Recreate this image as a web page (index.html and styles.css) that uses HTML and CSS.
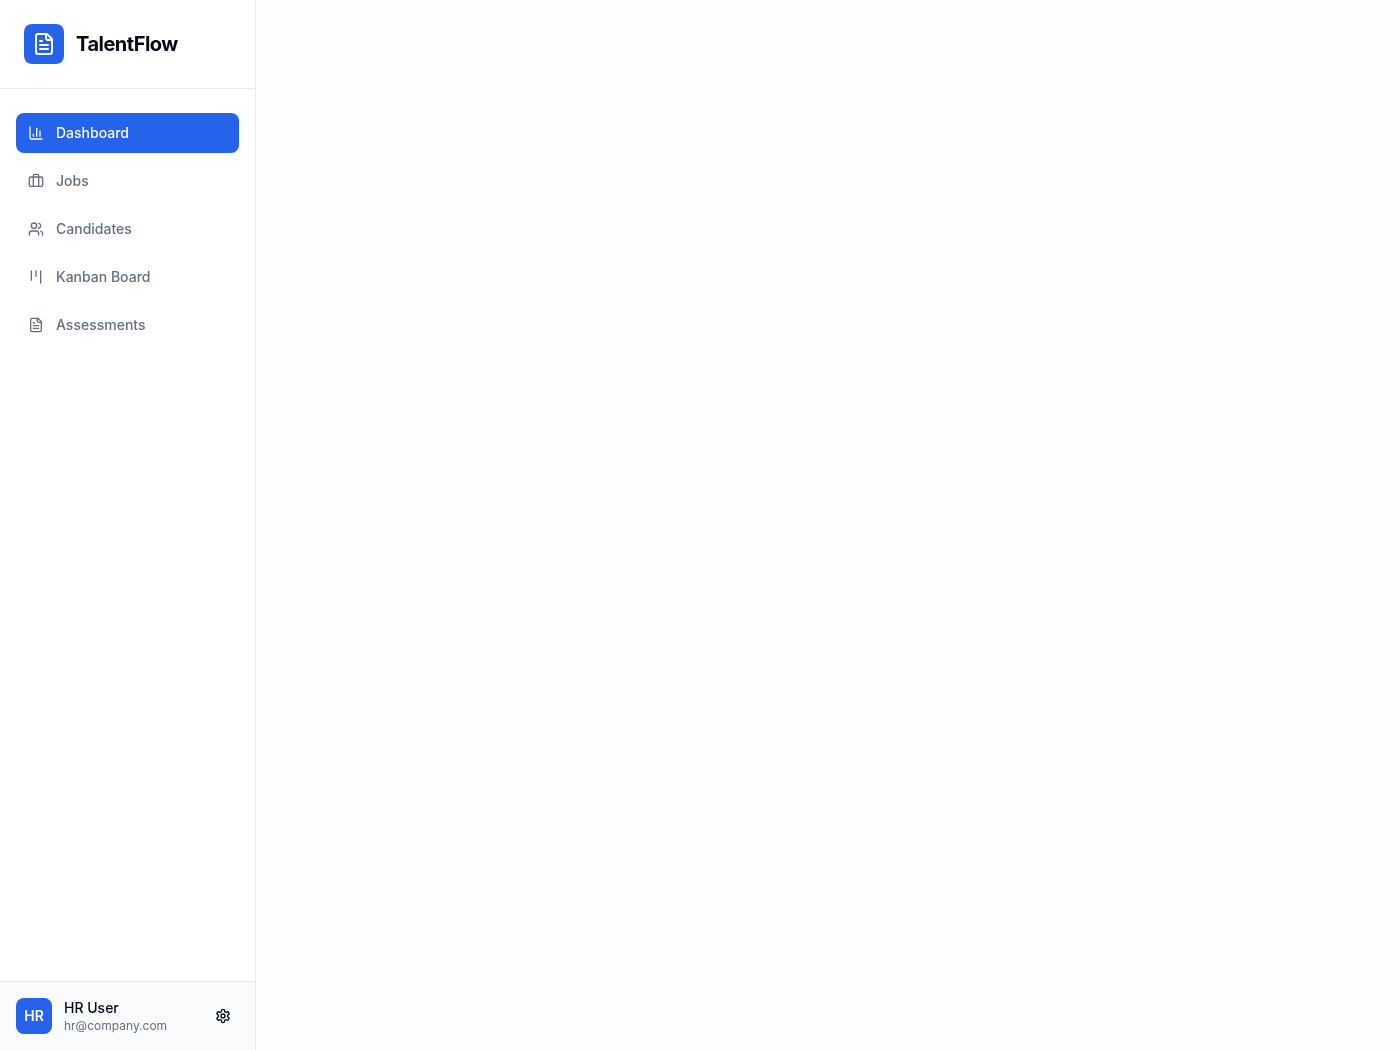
FILE: index.html
```html
<!DOCTYPE html>
<html lang="en">

<head>
    <meta charset="utf-8">
    <meta name="viewport" content="width=device-width, initial-scale=1.0">
    <title>TalentFlow</title>
    <link rel="stylesheet" href="styles.css">
</head>

<body>

    <aside class="sidebar">
        <header class="brand">
            <div class="brand-logo">
                <svg class="icon-logo" viewBox="0 0 24 24">
                    <path d="M15 2H6a2 2 0 0 0-2 2v16a2 2 0 0 0 2 2h12a2 2 0 0 0 2-2V7Z" />
                    <path d="M14 2v4a2 2 0 0 0 2 2h4" />
                    <path d="M10 9H8" />
                    <path d="M16 13H8" />
                    <path d="M16 17H8" />
                </svg>
            </div>
            <span class="brand-name">TalentFlow</span>
        </header>

        <nav class="menu">
            <a class="menu-item active" href="#">
                <svg class="icon" viewBox="0 0 24 24">
                    <path d="M3 3v16a2 2 0 0 0 2 2h16" />
                    <path d="M18 17V9" />
                    <path d="M13 17V5" />
                    <path d="M8 17v-3" />
                </svg>
                <span>Dashboard</span>
            </a>
            <a class="menu-item" href="#">
                <svg class="icon" viewBox="0 0 24 24">
                    <path d="M16 20V4a2 2 0 0 0-2-2h-4a2 2 0 0 0-2 2v16" />
                    <rect width="20" height="14" x="2" y="6" rx="2" />
                </svg>
                <span>Jobs</span>
            </a>
            <a class="menu-item" href="#">
                <svg class="icon" viewBox="0 0 24 24">
                    <path d="M16 21v-2a4 4 0 0 0-4-4H6a4 4 0 0 0-4 4v2" />
                    <circle cx="9" cy="7" r="4" />
                    <path d="M22 21v-2a4 4 0 0 0-3-3.87" />
                    <path d="M16 3.13a4 4 0 0 1 0 7.75" />
                </svg>
                <span>Candidates</span>
            </a>
            <a class="menu-item" href="#">
                <svg class="icon" viewBox="0 0 24 24">
                    <path d="M5 3v14" />
                    <path d="M12 3v8" />
                    <path d="M19 3v18" />
                </svg>
                <span>Kanban Board</span>
            </a>
            <a class="menu-item" href="#">
                <svg class="icon" viewBox="0 0 24 24">
                    <path d="M15 2H6a2 2 0 0 0-2 2v16a2 2 0 0 0 2 2h12a2 2 0 0 0 2-2V7Z" />
                    <path d="M14 2v4a2 2 0 0 0 2 2h4" />
                    <path d="M10 9H8" />
                    <path d="M16 13H8" />
                    <path d="M16 17H8" />
                </svg>
                <span>Assessments</span>
            </a>
        </nav>

        <footer class="user">
            <div class="avatar">HR</div>
            <div class="user-info">
                <div class="user-name">HR User</div>
                <div class="user-mail">hr@company.com</div>
            </div>
            <button class="settings">
                <svg class="icon" viewBox="0 0 24 24">
                    <path d="M12.22 2h-.44a2 2 0 0 0-2 2v.18a2 2 0 0 1-1 1.73l-.43.25a2 2 0 0 1-2 0l-.15-.08a2 2 0 0 0-2.73.73l-.22.38a2 2 0 0 0 .73 2.73l.15.1a2 2 0 0 1 1 1.72v.51a2 2 0 0 1-1 1.74l-.15.09a2 2 0 0 0-.73 2.73l.22.38a2 2 0 0 0 2.73.73l.15-.08a2 2 0 0 1 2 0l.43.25a2 2 0 0 1 1 1.73V20a2 2 0 0 0 2 2h.44a2 2 0 0 0 2-2v-.18a2 2 0 0 1 1-1.73l.43-.25a2 2 0 0 1 2 0l.15.08a2 2 0 0 0 2.73-.73l.22-.39a2 2 0 0 0-.73-2.73l-.15-.08a2 2 0 0 1-1-1.74v-.5a2 2 0 0 1 1-1.74l.15-.09a2 2 0 0 0 .73-2.73l-.22-.38a2 2 0 0 0-2.73-.73l-.15.08a2 2 0 0 1-2 0l-.43-.25a2 2 0 0 1-1-1.73V4a2 2 0 0 0-2-2z" />
                    <circle cx="12" cy="12" r="3" />
                </svg>
            </button>
        </footer>
    </aside>

    <main class="content"></main>

</body>

</html>
```

FILE: styles.css
```css
* {
    box-sizing: border-box;
}

body {
    margin: 0;
    height: 100vh;
    display: flex;
    font-family: Inter, sans-serif;
    line-height: 24px;
    color: #020817;
    background: #fff;
}

svg {
    fill: none;
    stroke: currentColor;
    stroke-width: 2;
    stroke-linecap: round;
    stroke-linejoin: round;
}

.icon {
    width: 16px;
    height: 16px;
    flex-shrink: 0;
}

.icon-logo {
    width: 24px;
    height: 24px;
}

.sidebar {
    width: 256px;
    height: 100%;
    display: flex;
    flex-direction: column;
    background: #fff;
    border-right: 1px solid #e5e8ee;
    will-change: transform;
}

.brand {
    display: flex;
    align-items: center;
    gap: 12px;
    height: 89px;
    padding: 24px;
    border-bottom: 1px solid #e5e8ee;
}

.brand-logo {
    width: 40px;
    height: 40px;
    display: flex;
    align-items: center;
    justify-content: center;
    border-radius: 8px;
    background: #2563eb;
    color: #fff;
}

.brand-name {
    font-size: 20px;
    line-height: 28px;
    font-weight: 700;
    letter-spacing: -0.5px;
}

.menu {
    flex: 1;
    display: flex;
    flex-direction: column;
    gap: 8px;
    padding: 24px 16px;
}

.menu-item {
    display: flex;
    align-items: center;
    gap: 12px;
    height: 40px;
    padding: 0 12px;
    border-radius: 8px;
    font-size: 14px;
    line-height: 20px;
    font-weight: 500;
    color: #666f83;
    text-decoration: none;
}

.menu-item.active {
    background: #2563eb;
    color: #f8fafc;
}

.user {
    display: flex;
    align-items: center;
    gap: 12px;
    height: 69px;
    padding: 16px;
    background: #fafbfd;
    border-top: 1px solid #e5e8ee;
}

.avatar {
    width: 36px;
    height: 36px;
    display: flex;
    align-items: center;
    justify-content: center;
    border-radius: 8px;
    background: #2563eb;
    color: #f8fafc;
    font-size: 14px;
    line-height: 20px;
    font-weight: 600;
}

.user-info {
    flex: 1;
    margin-right: -4px;
    min-width: 0;
}

.user-name {
    font-size: 14px;
    line-height: 20px;
    font-weight: 500;
}

.user-mail {
    font-size: 12px;
    line-height: 16px;
    color: #666f83;
}

.settings {
    width: 32px;
    height: 32px;
    display: flex;
    align-items: center;
    justify-content: center;
    padding: 0;
    border: 0;
    background: none;
    color: #020817;
}

.content {
    flex: 1;
    background: #fefefe;
}
```
